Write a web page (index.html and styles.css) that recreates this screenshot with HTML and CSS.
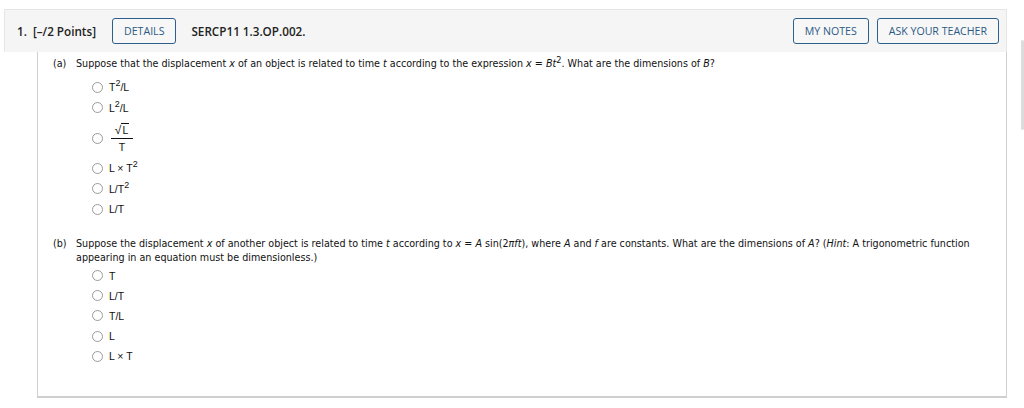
FILE: index.html
```html
<!DOCTYPE html>
<html>
<head>
<meta charset="utf-8">
<link rel="stylesheet" href="styles.css">
</head>
<body>
<div class="page">
  <div class="qhead">
    <div class="qleft">
      <span class="qnum">1.</span>
      <span class="qpts">[–/2 Points]</span>
      <span class="btn">DETAILS</span>
      <span class="qid">SERCP11 1.3.OP.002.</span>
    </div>
    <div class="qright">
      <span class="btn">MY NOTES</span>
      <span class="btn">ASK YOUR TEACHER</span>
    </div>
  </div>
  <div class="qbody">
    <div class="part">
      <div class="prompt"><span class="lbl">(a)</span><span class="ptext">Suppose that the displacement <i>x</i> of an object is related to time <i>t</i> according to the expression <i>x</i> = <i>Bt</i><sup>2</sup>. What are the dimensions of <i>B</i>?</span></div>
      <ul class="opts">
        <li><span class="radio"></span><span>T<sup>2</sup>/L</span></li>
        <li><span class="radio"></span><span>L<sup>2</sup>/L</span></li>
        <li class="fracopt"><span class="radio"></span><span class="frac"><span class="num"><span class="sqrt">√</span><span class="rad">L</span></span><span class="den">T</span></span></li>
        <li><span class="radio"></span><span>L × T<sup>2</sup></span></li>
        <li><span class="radio"></span><span>L/T<sup>2</sup></span></li>
        <li><span class="radio"></span><span>L/T</span></li>
      </ul>
    </div>
    <div class="part partb">
      <div class="prompt"><span class="lbl">(b)</span><span class="ptext">Suppose the displacement <i>x</i> of another object is related to time <i>t</i> according to <i>x</i> = <i>A</i> sin(2<i>πft</i>), where <i>A</i> and <i>f</i> are constants. What are the dimensions of <i>A</i>? (<i>Hint</i>: A trigonometric function appearing in an equation must be dimensionless.)</span></div>
      <ul class="opts optsb">
        <li><span class="radio"></span><span>T</span></li>
        <li><span class="radio"></span><span>L/T</span></li>
        <li><span class="radio"></span><span>T/L</span></li>
        <li><span class="radio"></span><span>L</span></li>
        <li><span class="radio"></span><span>L × T</span></li>
      </ul>
    </div>
  </div>
</div>
<div class="scrollthumb"></div>
</body>
</html>
```
FILE: styles.css
```css
html, body { margin: 0; padding: 0; background: #fff; }
body { width: 1024px; height: 408px; overflow: hidden; position: relative; }
.page { padding: 9px 17px 0 4px; }
.qhead {
  display: flex; justify-content: space-between; align-items: center;
  height: 42px; background: #f5f5f5; border: 1px solid #e6e6e6; border-bottom: none;
  font-family: "Open Sans", sans-serif; font-size: 11.7px; color: #222;
  padding: 0 7px 0 12px;
}
.qleft, .qright { display: flex; align-items: center; }
.qnum { font-weight: 600; margin-right: 6px; }
.qpts { font-weight: 600; margin-right: 16px; }
.qid { font-weight: 600; margin-left: 15px; }
.btn {
  display: inline-flex; align-items: center; justify-content: center;
  height: 24px; padding: 0 11px; border: 1px solid #2c5f8c; border-radius: 3px;
  color: #2c5a86; font-size: 10.6px; font-weight: 400; background: #f7f7f7;
}
.qright .btn + .btn { margin-left: 8px; }
.qbody {
  margin-left: 33px; height: 339px;
  border-left: 1px solid #d0d0d0; border-right: 1px solid #d0d0d0; border-bottom: 2px solid #cfcfcf;
  padding: 5px 0 0 15px;
  font-family: "DejaVu Sans", Verdana, sans-serif; font-size: 9.6px; color: #111;
}
.prompt { display: flex; line-height: 14px; }
.lbl { width: 23px; flex: none; }
.ptext { flex: 1; padding-right: 30px; }
sup { font-size: 0.85em; line-height: 0; vertical-align: 0.55em; }
.opts { list-style: none; margin: 6px 0 0 0; padding: 0 0 0 39px; font-family: "Liberation Sans", Arial, sans-serif; font-size: 10.5px; }
.opts li { display: flex; align-items: center; height: 20.5px; }
.optsb li { height: 20.2px; }
.radio {
  width: 9px; height: 9px; border: 1px solid #9a9a9a; border-radius: 50%;
  margin-right: 6px; flex: none; background: #fff;
}
.fracopt { height: 40px !important; }
.frac { display: inline-flex; flex-direction: column; align-items: center; margin-left: 2px; }
.num { display: flex; align-items: flex-end; padding: 0 3px 2px; line-height: 12px; }
.sqrt { font-size: 12px; }
.rad { border-top: 1px solid #111; padding: 1px 1px 0; line-height: 11px; }
.den { border-top: 1px solid #111; padding: 2px 4px 0; line-height: 12px; width: 14px; text-align: center; }
.partb { margin-top: 17px; }
.optsb { margin-top: 1px; }
.scrollthumb { position: absolute; right: 0; top: 40px; width: 3px; height: 90px; background: #dcdcdc; border-radius: 2px; }
```
